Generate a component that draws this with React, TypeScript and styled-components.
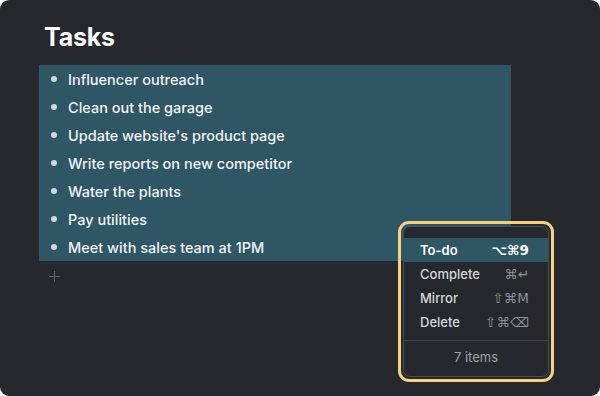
import React from 'react';
import styled, { createGlobalStyle } from 'styled-components';

const tasks = [
  'Influencer outreach',
  'Clean out the garage',
  "Update website's product page",
  'Write reports on new competitor',
  'Water the plants',
  'Pay utilities',
  'Meet with sales team at 1PM',
];

const menuItems = [
  { label: 'To-do', keys: '⌥⌘9', active: true },
  { label: 'Complete', keys: '⌘↵', active: false },
  { label: 'Mirror', keys: '⇧⌘M', active: false },
  { label: 'Delete', keys: '⇧⌘⌫', active: false },
];

function App(): JSX.Element {
  return (
    <>
      <GlobalStyle />
      <Window>
        <Title>Tasks</Title>
        <List>
          {tasks.map((task) => (
            <Item key={task}>
              <Bullet />
              <span>{task}</span>
            </Item>
          ))}
        </List>
        <AddRow>
          <Plus />
        </AddRow>
        <FocusRing>
          <Menu>
            {menuItems.map((item) => (
              <MenuRow key={item.label} $active={item.active}>
                <span>{item.label}</span>
                <Keys $active={item.active}>{item.keys}</Keys>
              </MenuRow>
            ))}
            <Footer>7 items</Footer>
          </Menu>
        </FocusRing>
      </Window>
    </>
  );
}

const GlobalStyle = createGlobalStyle`
  html, body {
    margin: 0;
    padding: 0;
    background: #ffffff;
  }
  * {
    box-sizing: border-box;
  }
`;

const Window = styled.div`
  position: relative;
  width: 600px;
  height: 396px;
  border-radius: 9px;
  background: #25292e;
  padding: 22px 39px;
  font-family: Inter, 'Noto Sans', 'DejaVu Sans', sans-serif;
  color: #f2f2f2;
  overflow: hidden;
`;

const Title = styled.h1`
  margin: 0 0 13px 5px;
  font-size: 25px;
  line-height: 30px;
  font-weight: 700;
  color: #ffffff;
  letter-spacing: -0.2px;
`;

const List = styled.ul`
  margin: 0;
  padding: 0;
  list-style: none;
  width: 472px;
  background: #2e5664;
`;

const Item = styled.li`
  display: flex;
  align-items: center;
  height: 28px;
  padding-left: 12px;
  gap: 11px;
  font-size: 14.5px;
  font-weight: 500;
  color: #f1f3f4;
`;

const Bullet = styled.i`
  width: 6px;
  height: 6px;
  border-radius: 50%;
  background: #d4d6d8;
`;

const AddRow = styled.div`
  display: flex;
  align-items: center;
  height: 30px;
  padding-left: 10px;
`;

// thin plus drawn from two hairlines
const Plus = styled.i`
  position: relative;
  width: 11px;
  height: 11px;
  &::before,
  &::after {
    content: '';
    position: absolute;
    background: #5f6368;
  }
  &::before {
    left: 0;
    right: 0;
    top: 5px;
    height: 1px;
  }
  &::after {
    top: 0;
    bottom: 0;
    left: 5px;
    width: 1px;
  }
`;

const FocusRing = styled.div`
  position: absolute;
  left: 398px;
  top: 221px;
  width: 156px;
  border: 3px solid #f6d27e;
  border-radius: 11px;
  padding: 2px;
`;

const Menu = styled.div`
  border: 1px solid #4a4e53;
  border-radius: 7px;
  background: #25292e;
  padding-top: 11px;
  overflow: hidden;
`;

const MenuRow = styled.div<{ $active: boolean }>`
  display: flex;
  align-items: center;
  justify-content: space-between;
  height: 24px;
  padding: 0 19px 0 16px;
  font-size: 13px;
  font-weight: ${(p) => (p.$active ? 600 : 500)};
  color: ${(p) => (p.$active ? '#ffffff' : '#d6d8da')};
  background: ${(p) => (p.$active ? '#2e5664' : 'transparent')};
`;

const Keys = styled.span<{ $active: boolean }>`
  font-family: 'DejaVu Sans', sans-serif;
  font-size: 13.5px;
  font-weight: ${(p) => (p.$active ? 700 : 400)};
  color: ${(p) => (p.$active ? '#ffffff' : '#8c9095')};
`;

const Footer = styled.div`
  margin-top: 6px;
  border-top: 1px solid #3e4247;
  padding: 8px 0 11px;
  line-height: 16px;
  text-align: center;
  font-size: 13px;
  color: #a0a4a8;
`;

export default App;
